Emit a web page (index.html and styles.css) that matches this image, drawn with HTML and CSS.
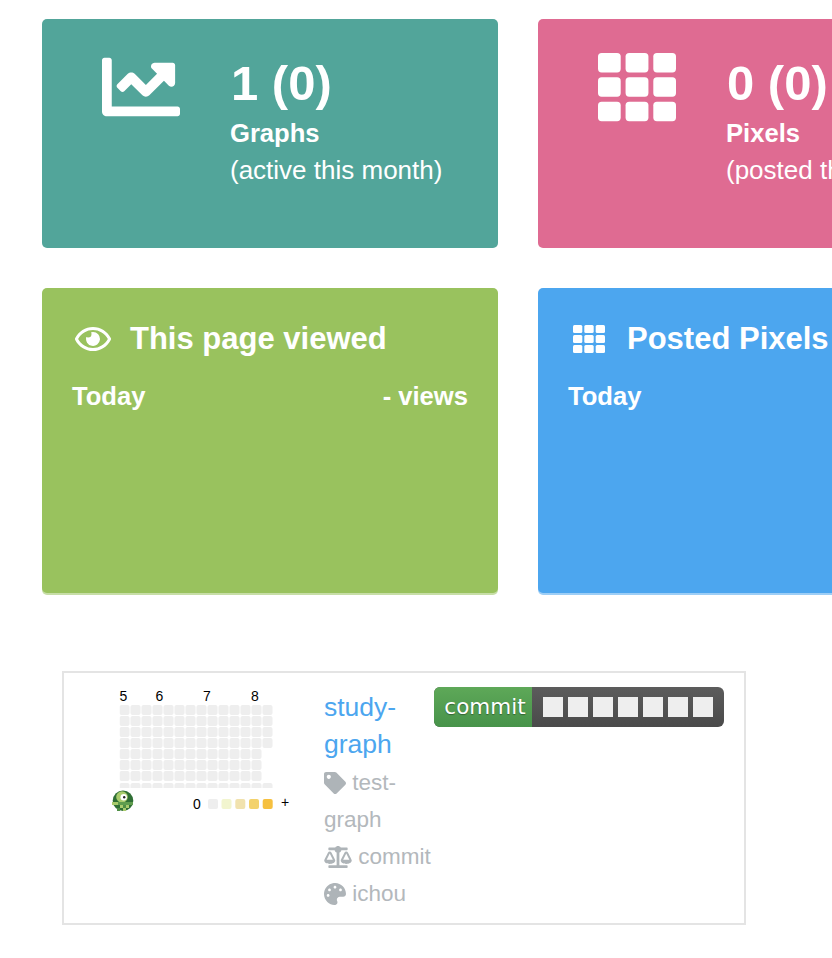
FILE: index.html
```html
<!DOCTYPE html>
<html lang="en">
<head>
    <meta charset="UTF-8">
    <meta name="viewport" content="width=device-width, initial-scale=1.0">
    <title>Pixela dashboard</title>
    <link rel="stylesheet" href="styles.css">
</head>
<body>
    <div class="page">
        <div class="cards">
            <div class="card stat teal">
                <svg class="stat-icon" viewBox="0 0 512 512"><path fill="currentColor" d="M496 384H64V80c0-8.84-7.16-16-16-16H16C7.16 64 0 71.16 0 80v336c0 17.67 14.33 32 32 32h464c8.84 0 16-7.16 16-16v-32c0-8.84-7.16-16-16-16zM464 96H345.94c-21.38 0-32.09 25.85-16.97 40.97l32.4 32.4L288 242.75l-73.37-73.37c-12.5-12.5-32.76-12.5-45.25 0l-68.69 68.69c-6.25 6.25-6.25 16.38 0 22.63l22.62 22.62c6.25 6.25 16.38 6.25 22.63 0L192 237.25l73.37 73.37c12.5 12.5 32.76 12.5 45.25 0l96-96 32.4 32.4c15.12 15.12 40.97 4.41 40.97-16.97V112c0-8.84-7.16-16-16-16z"/></svg>
                <div class="stat-text">
                    <div class="stat-num">1 (0)</div>
                    <div class="stat-name">Graphs</div>
                    <div class="stat-note">(active this month)</div>
                </div>
            </div>
            <div class="card stat pink">
                <svg class="stat-icon" viewBox="0 0 512 512"><use href="#grid-icon"/></svg>
                <div class="stat-text">
                    <div class="stat-num">0 (0)</div>
                    <div class="stat-name">Pixels</div>
                    <div class="stat-note">(posted this month)</div>
                </div>
            </div>
            <div class="card panel green">
                <div class="panel-title">
                    <svg class="eye-icon" viewBox="0 0 576 512"><path fill="currentColor" d="M288 144a110.94 110.94 0 0 0-31.24 5 55.4 55.4 0 0 1 7.24 27 56 56 0 0 1-56 56 55.4 55.4 0 0 1-27-7.24A111.71 111.71 0 1 0 288 144zm284.52 97.4C518.29 135.59 410.93 64 288 64S57.68 135.64 3.48 241.41a32.35 32.35 0 0 0 0 29.19C57.71 376.41 165.07 448 288 448s230.32-71.64 284.52-177.41a32.35 32.35 0 0 0 0-29.19zM288 400c-98.65 0-189.09-55-237.93-144C98.91 167 189.34 112 288 112s189.09 55 237.93 144C477.1 345 386.66 400 288 400z"/></svg>
                    <span>This page viewed</span>
                </div>
                <div class="panel-row"><span>Today</span><span>- views</span></div>
            </div>
            <div class="card panel blue">
                <div class="panel-title">
                    <svg class="small-grid" viewBox="0 0 512 512"><use href="#grid-icon"/></svg>
                    <span>Posted Pixels</span>
                </div>
                <div class="panel-row"><span>Today</span></div>
            </div>
        </div>

        <div class="item">
            <svg class="heatmap" viewBox="0 0 260 140" width="260" height="140">
                <defs>
                    <g id="grid-icon" fill="currentColor">
                        <rect x="0" y="32" width="149" height="128" rx="24"/>
                        <rect x="181" y="32" width="150" height="128" rx="24"/>
                        <rect x="363" y="32" width="149" height="128" rx="24"/>
                        <rect x="0" y="192" width="149" height="128" rx="24"/>
                        <rect x="181" y="192" width="150" height="128" rx="24"/>
                        <rect x="363" y="192" width="149" height="128" rx="24"/>
                        <rect x="0" y="352" width="149" height="128" rx="24"/>
                        <rect x="181" y="352" width="150" height="128" rx="24"/>
                        <rect x="363" y="352" width="149" height="128" rx="24"/>
                    </g>
                    <g id="row13" class="cell">
                        <rect x="0" width="10" height="10" rx="2"/><rect x="11" width="10" height="10" rx="2"/>
                        <rect x="22" width="10" height="10" rx="2"/><rect x="33" width="10" height="10" rx="2"/>
                        <rect x="44" width="10" height="10" rx="2"/><rect x="55" width="10" height="10" rx="2"/>
                        <rect x="66" width="10" height="10" rx="2"/><rect x="77" width="10" height="10" rx="2"/>
                        <rect x="88" width="10" height="10" rx="2"/><rect x="99" width="10" height="10" rx="2"/>
                        <rect x="110" width="10" height="10" rx="2"/><rect x="121" width="10" height="10" rx="2"/>
                        <rect x="132" width="10" height="10" rx="2"/>
                    </g>
                    <g id="row14" class="cell">
                        <use href="#row13"/>
                        <rect x="143" width="10" height="10" rx="2"/>
                    </g>
                    <clipPath id="chart-clip"><rect x="0" y="0" width="260" height="83"/></clipPath>
                </defs>
                <text class="month" x="59.500" y="14">5</text>
                <text class="month" x="95.500" y="14">6</text>
                <text class="month" x="143" y="14">7</text>
                <text class="month" x="191" y="14">8</text>
                <g clip-path="url(#chart-clip)" transform="translate(55.5 18)">
                    <use href="#row14" y="0"/>
                    <use href="#row14" y="11"/>
                    <use href="#row14" y="22"/>
                    <use href="#row14" y="33"/>
                    <use href="#row13" y="44"/>
                    <use href="#row13" y="55"/>
                    <use href="#row13" y="66"/>
                    <use href="#row14" y="78"/>
                </g>
                <!-- mascot -->
                <circle cx="59" cy="113.700" r="10.300" fill="#2f6f35"/>
                <circle cx="58" cy="110" r="5.800" fill="#a9cb6c"/>
                <circle cx="59.700" cy="110.300" r="3.200" fill="#fff"/>
                <circle cx="60.200" cy="110.300" r="1.200" fill="#222"/>
                <g shape-rendering="crispEdges">
                    <rect x="48" y="115" width="6" height="3" fill="#a9cb6c"/>
                    <rect x="54" y="115" width="15" height="3" fill="#5f9d4e"/>
                    <rect x="56" y="118" width="3" height="3" fill="#a9cb6c"/>
                    <rect x="59" y="118" width="3" height="3" fill="#4f8f45"/>
                    <rect x="62" y="118" width="3" height="3" fill="#a9cb6c"/>
                    <rect x="53" y="121" width="3" height="3" fill="#4f8f45"/>
                    <rect x="59" y="121" width="3" height="3" fill="#a9cb6c"/>
                </g>
                <text class="month" x="133" y="122">0</text>
                <rect x="144" y="112" width="10" height="10" rx="2" fill="#eeeeee"/>
                <rect x="157.500" y="112" width="10" height="10" rx="2" fill="#f2f5cf"/>
                <rect x="171.300" y="112" width="10" height="10" rx="2" fill="#f1e2ae"/>
                <rect x="185" y="112" width="10" height="10" rx="2" fill="#f3d26c"/>
                <rect x="198.700" y="112" width="10" height="10" rx="2" fill="#f6c03f"/>
                <text class="month" x="221" y="120">+</text>
            </svg>

            <div class="info">
                <a class="info-title">study-graph</a>
                <div class="info-line">
                    <svg class="tag-icon" viewBox="0 0 512 512"><path fill="currentColor" d="M0 252.118V48C0 21.49 21.49 0 48 0h204.118a48 48 0 0 1 33.941 14.059l211.882 211.882c18.745 18.745 18.745 49.137 0 67.882L293.823 497.941c-18.745 18.745-49.137 18.745-67.882 0L14.059 286.059A48 48 0 0 1 0 252.118zM112 64c-26.51 0-48 21.49-48 48s21.49 48 48 48 48-21.49 48-48-21.49-48-48-48z"/></svg>
                    test-graph
                </div>
                <div class="info-line">
                    <svg class="scale-icon" viewBox="0 0 640 512"><path fill="currentColor" d="M256 336h-.02c0-16.18 1.34-8.73-85.05-181.51-17.65-35.29-68.19-35.36-85.87 0C-2.06 328.75.02 320.33.02 336H0c0 44.18 57.31 80 128 80s128-35.82 128-80zM128 176l72 144H56l72-144zm511.98 160c0-16.18 1.34-8.73-85.05-181.51-17.65-35.29-68.19-35.36-85.87 0-87.12 174.26-85.04 165.84-85.04 181.51H384c0 44.18 57.31 80 128 80s128-35.82 128-80h-.02zM440 320l72-144 72 144H440zm88 128H352V153.25c23.51-10.29 41.16-31.48 46.39-57.25H528c8.84 0 16-7.16 16-16V48c0-8.84-7.16-16-16-16H383.64C369.04 12.68 346.09 0 320 0s-49.04 12.68-63.64 32H112c-8.84 0-16 7.16-16 16v32c0 8.84 7.16 16 16 16h129.61c5.23 25.76 22.87 46.96 46.39 57.25V448H112c-8.84 0-16 7.16-16 16v32c0 8.84 7.16 16 16 16h416c8.84 0 16-7.16 16-16v-32c0-8.84-7.16-16-16-16z"/></svg>
                    commit
                </div>
                <div class="info-line">
                    <svg class="tag-icon" viewBox="0 0 512 512"><path fill="currentColor" d="M204.3 5C104.9 24.4 24.8 104.3 5.2 203.4c-37 187 131.7 326.4 258.8 306.7 41.2-6.4 61.4-54.6 42.5-91.7-23.1-45.4 9.9-98.4 60.9-98.4h79.7c35.8 0 64.8-29.6 64.9-65.3C511.5 97.1 368.1-26.9 204.3 5zM96 320c-17.7 0-32-14.3-32-32s14.3-32 32-32 32 14.3 32 32-14.3 32-32 32zm32-128c-17.7 0-32-14.3-32-32s14.3-32 32-32 32 14.3 32 32-14.3 32-32 32zm128-64c-17.7 0-32-14.3-32-32s14.3-32 32-32 32 14.3 32 32-14.3 32-32 32zm128 64c-17.7 0-32-14.3-32-32s14.3-32 32-32 32 14.3 32 32-14.3 32-32 32z"/></svg>
                    ichou
                </div>
            </div>

            <div class="badge">
                <div class="badge-label">commit</div>
                <div class="badge-days">
                    <span class="day"></span><span class="day"></span><span class="day"></span><span class="day"></span>
                    <span class="day"></span><span class="day"></span><span class="day"></span>
                </div>
            </div>
        </div>
    </div>
</body>
</html>
```

FILE: styles.css
```css
* {
    margin: 0;
    padding: 0;
    box-sizing: border-box;
}

html, body {
    height: 100%;
    overflow: hidden;
}

body {
    font-family: "Liberation Sans", Arial, sans-serif;
    background: #fff;
    color: #fff;
}

.page {
    width: 994px;
    padding: 19px 0 0 42px;
}

.cards {
    display: grid;
    grid-template-columns: 456px 456px;
    grid-template-rows: 229px 305px;
    gap: 40px;
}

.card {
    border-radius: 5px;
}

.teal { background: #52a59a; }
.pink { background: #df6b92; }
.green {
    background: #99c25e;
    box-shadow: 0 2px 0 rgba(153, 194, 94, 0.55);
}
.blue {
    background: #4ca6ef;
    box-shadow: 0 2px 0 rgba(76, 166, 239, 0.55);
}

/* top cards */
.stat {
    display: flex;
    gap: 50px;
    padding: 29px 0 0 60px;
}

.stat-icon {
    width: 78px;
    height: 78px;
    flex-shrink: 0;
}

.stat-text {
    white-space: nowrap;
    margin-top: 4px;
}

.stat-num {
    font-size: 49px;
    font-weight: 700;
    line-height: 63px;
    margin-left: 1px;
}

.stat-name {
    font-size: 25.6px;
    font-weight: 700;
    line-height: 36px;
}

.stat-note {
    font-size: 26px;
    line-height: 39px;
}

/* bottom cards */
.panel {
    padding: 30px 30px 0;
}

.panel-title {
    display: flex;
    align-items: center;
    gap: 19px;
    font-size: 31px;
    font-weight: 700;
    line-height: 42px;
    white-space: nowrap;
}

.eye-icon {
    width: 36px;
    height: 32px;
    margin-left: 3px;
}

.small-grid {
    width: 32px;
    height: 32px;
    margin: 0 3px 0 5px;
}

.panel-row {
    display: flex;
    justify-content: space-between;
    font-size: 25.6px;
    font-weight: 700;
    line-height: 32px;
    margin-top: 20px;
}

/* graph row */
.item {
    display: flex;
    align-items: flex-start;
    width: 684px;
    height: 254px;
    margin: 78px 0 0 20px;
    border: 2px solid #e4e4e4;
    padding-top: 14px;
}

.heatmap {
    flex-shrink: 0;
}

.heatmap .cell {
    fill: #eeeeee;
}

.month {
    font-size: 14px;
    text-anchor: middle;
    fill: #000;
}

.info {
    width: 110px;
    flex-shrink: 0;
    padding-top: 2px;
    color: #b3b8bc;
    font-size: 22.5px;
    line-height: 37px;
}

.info-title {
    display: block;
    margin-bottom: 1px;
    color: #4ca6ef;
    font-size: 26.5px;
}

.tag-icon,
.scale-icon {
    height: 22px;
    vertical-align: -4px;
    color: #aeb4b8;
}

.tag-icon {
    width: 22px;
}

.scale-icon {
    width: 28px;
}

.badge {
    display: flex;
    width: 290px;
    height: 40px;
    border-radius: 6px;
    overflow: hidden;
    color: #fff;
    background: linear-gradient(#5c5c5c, #4a4a4a);
}

.badge-label {
    width: 98px;
    padding-left: 4px;
    font-family: "DejaVu Sans", Verdana, sans-serif;
    font-size: 21.5px;
    line-height: 39px;
    text-align: center;
    text-shadow: 0 1px 1px rgba(0, 0, 0, 0.35);
    background: linear-gradient(#5ea858, #47934a);
}

.badge-days {
    display: flex;
    align-items: center;
    gap: 5px;
    padding-left: 11px;
}

.day {
    width: 20px;
    height: 20px;
    background: #eeeeee;
}
```
